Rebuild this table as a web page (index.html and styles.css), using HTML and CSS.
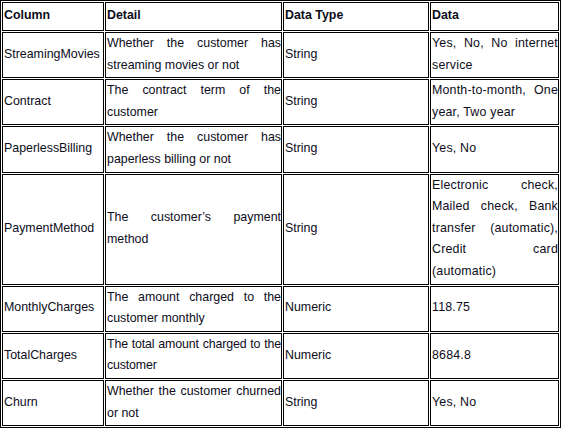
FILE: index.html
```html
<!DOCTYPE html>
<html>
<head>
<meta charset="utf-8">
<link rel="stylesheet" href="styles.css">
</head>
<body>
<table class="tbl">
  <colgroup>
    <col class="c1"><col class="c2"><col class="c3"><col class="c4">
  </colgroup>
  <thead>
    <tr class="head">
      <th>Column</th><th>Detail</th><th>Data Type</th><th>Data</th>
    </tr>
  </thead>
  <tbody>
    <tr>
      <td>StreamingMovies</td>
      <td class="just">Whether the customer has streaming movies or not</td>
      <td>String</td>
      <td class="just data">Yes, No, No internet service</td>
    </tr>
    <tr>
      <td>Contract</td>
      <td class="just">The contract term of the customer</td>
      <td>String</td>
      <td class="just data">Month-to-month, One year, Two year</td>
    </tr>
    <tr>
      <td>PaperlessBilling</td>
      <td class="just">Whether the customer has paperless billing or not</td>
      <td>String</td>
      <td class="just data">Yes, No</td>
    </tr>
    <tr>
      <td>PaymentMethod</td>
      <td class="just">The customer’s payment method</td>
      <td>String</td>
      <td class="just data">Electronic check, Mailed check, Bank transfer (automatic), Credit card (automatic)</td>
    </tr>
    <tr>
      <td>MonthlyCharges</td>
      <td class="just">The amount charged to the customer monthly</td>
      <td>Numeric</td>
      <td class="just data">118.75</td>
    </tr>
    <tr>
      <td>TotalCharges</td>
      <td class="just tight">The total amount charged to the customer</td>
      <td>Numeric</td>
      <td class="just data">8684.8</td>
    </tr>
    <tr>
      <td>Churn</td>
      <td class="just">Whether the customer churned or not</td>
      <td>String</td>
      <td class="just data">Yes, No</td>
    </tr>
  </tbody>
</table>
</body>
</html>
```
FILE: styles.css
```css
html, body {
  margin: 0;
  padding: 0;
  background: #ffffff;
}
.tbl {
  border: 1px solid #000;
  border-collapse: separate;
  border-spacing: 1px;
  table-layout: fixed;
  width: 560px;
  font-family: "Liberation Sans", Arial, sans-serif;
  font-size: 12.4px;
  line-height: 21.6px;
  color: #0d0d1a;
}
.c1 { width: 102px; }
.c2 { width: 177px; }
.c3 { width: 146px; }
.c4 { width: 129px; }
.tbl th, .tbl td {
  border: 1px solid #000;
  padding: 0 0 1px 1px;
  vertical-align: middle;
  text-align: left;
}
.tbl th {
  font-weight: bold;
  height: 26px;
}
.just {
  text-align: justify !important;
}
.tight {
  letter-spacing: -0.15px;
}
.data {
  letter-spacing: 0.2px;
}
```
